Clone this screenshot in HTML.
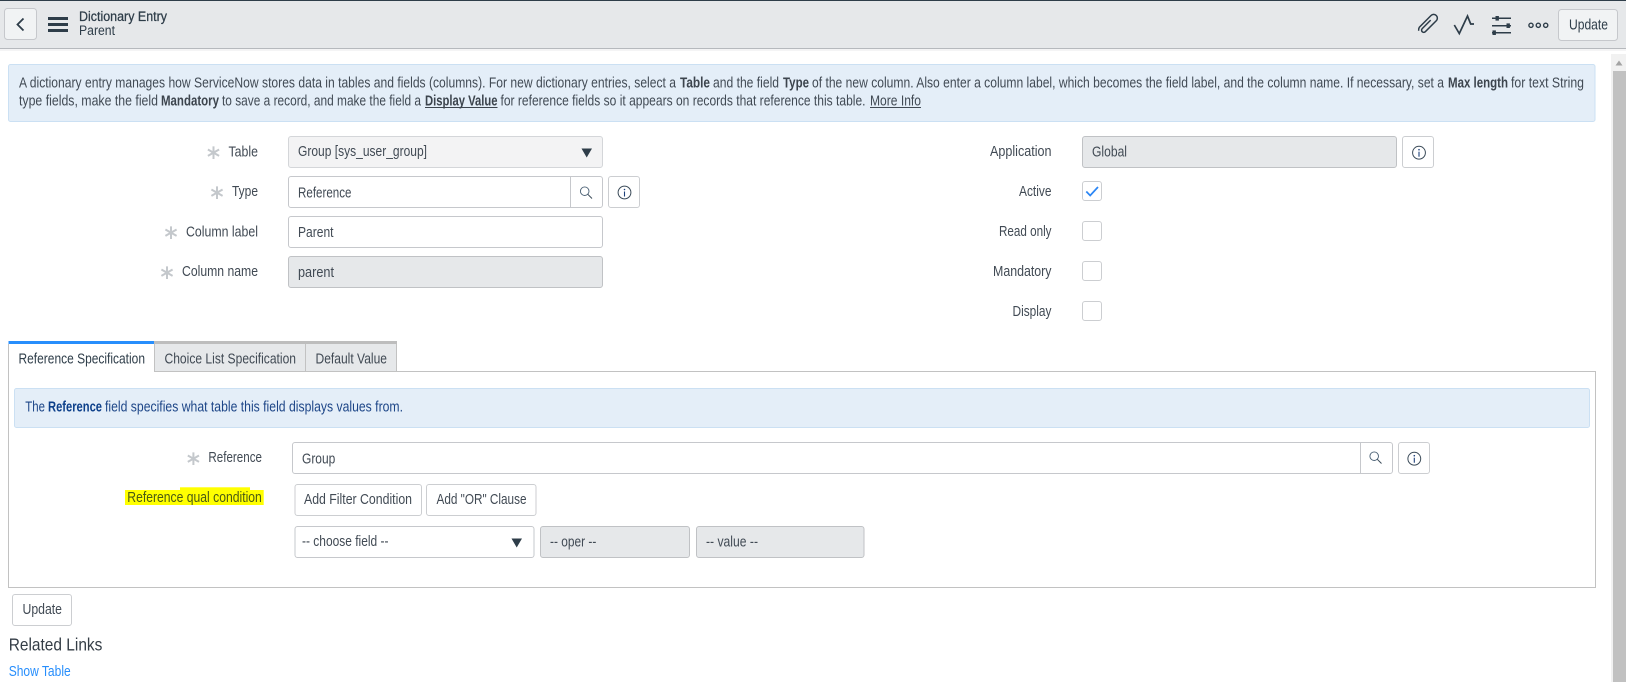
<!DOCTYPE html>
<html lang="en"><head><meta charset="utf-8"><title>Dictionary Entry - Parent</title>
<style>
html,body{margin:0;padding:0;background:#fff;width:1626px;height:682px;overflow:hidden}
svg{display:block;position:absolute;left:0;top:0}
text{font-family:"Liberation Sans",sans-serif;font-size:14.5px;fill:#414a54}
.b{font-weight:bold;fill:#3c444d}
.m{stroke:#2e3d49;stroke-width:.25;fill:#2e3d49}
.box{fill:#fff;stroke:#c6c8cc;stroke-width:1}
.dis{fill:#e6e8ea;stroke:#c0c2c5;stroke-width:1}
.btn{fill:#fff;stroke:#ccced1;stroke-width:1}
.ast{stroke:#c4c8cc;stroke-width:2;fill:none}
.tri{fill:#2e3d49}
.ic{fill:none;stroke:#2e3d49}
</style></head><body>
<svg width="1626" height="682" viewBox="0 0 1626 682" xmlns="http://www.w3.org/2000/svg">
<defs>
<g id="ast"><path class="ast" d="M0-6.3V6.3M-5.6-3.2L5.6 3.2M-5.6 3.2L5.6-3.2"/></g>
<g id="srch"><circle cx="-1.3" cy="-1.3" r="4.3" fill="none" stroke="#4a6074" stroke-width=".9"/><path d="M1.8 1.8L6 6" stroke="#3a4a58" stroke-width="1"/></g>
<g id="info"><circle r="6.4" fill="none" stroke="#3a4a58" stroke-width="1"/><path d="M0-1V4" stroke="#1d3f7a" stroke-width="1.1"/><circle cy="-3" r=".8" fill="#1d3f7a"/></g>
</defs>

<!-- Top bar -->
<rect x="0" y="0" width="1626" height="48" fill="#e6e8ea"/>
<rect x="0" y="0" width="1626" height="1" fill="#2e3d49"/>
<rect x="0" y="48" width="1626" height="1" fill="#b6b9bd"/>
<rect x="0" y="49" width="1626" height="2" fill="#f4f4f5"/>
<rect x="4.5" y="8.5" width="32" height="31" rx="3" fill="#f1f3f4" stroke="#c6c8cc"/>
<path d="M23.5 18.5L17.5 24.5L23.5 30.5" fill="none" stroke="#2e3d49" stroke-width="1.8"/>
<rect x="48" y="17" width="20" height="3" fill="#2e3d49"/>
<rect x="48" y="23" width="20" height="3" fill="#2e3d49"/>
<rect x="48" y="29" width="20" height="3" fill="#2e3d49"/>
<text class="m" x="79" y="21" textLength="88" lengthAdjust="spacingAndGlyphs" style="font-size:13.5px">Dictionary Entry</text>
<text x="79" y="35" textLength="36" lengthAdjust="spacingAndGlyphs" style="font-size:13.5px;fill:#2e3d49">Parent</text>

<g transform="translate(1428 24.5) rotate(45)"><path class="ic" stroke-width="1.5" d="M-1.2-5V7a2.2 2.2 0 0 0 4.4 0V-8.5a3.7 3.7 0 0 0-7.4 0V8a5 5 0 0 0 2 3"/></g>
<path class="ic" stroke-width="1.7" d="M1454.3 25L1459.3 33.5L1467.5 16L1470.7 24H1474"/>
<g class="ic" stroke-width="1.5"><path d="M1492 18.3H1511M1492 25.7H1511M1492 32.7H1511"/></g>
<rect x="1495.5" y="16" width="3.4" height="4.6" fill="#2e3d49"/>
<rect x="1506.5" y="23.4" width="3.4" height="4.6" fill="#2e3d49"/>
<rect x="1492.5" y="30.4" width="3.4" height="4.6" fill="#2e3d49"/>
<circle class="ic" cx="1531" cy="25.3" r="2.1" stroke-width="1.4"/>
<circle class="ic" cx="1538.3" cy="25.3" r="2.1" stroke-width="1.4"/>
<circle class="ic" cx="1545.7" cy="25.3" r="2.1" stroke-width="1.4"/>
<rect x="1558.5" y="9.5" width="59" height="31" rx="3" fill="#f1f3f4" stroke="#c6c8cc"/>
<text x="1569" y="29.5" textLength="39" lengthAdjust="spacingAndGlyphs" style="fill:#2e3d49">Update</text>

<!-- Scrollbar -->
<rect x="1611" y="54" width="15" height="628" fill="#f1f1f1"/>
<rect x="1613" y="71" width="13" height="611" fill="#c1c1c1"/>
<path d="M1619 60.5L1622.5 65.5H1615.5Z" fill="#a3a3a3"/>

<!-- Info banner -->
<rect x="8.5" y="64.5" width="1586.5" height="57" rx="2" fill="#e4eef8" stroke="#cbe0f3"/>
<text x="19" y="87.5" textLength="657" lengthAdjust="spacingAndGlyphs">A dictionary entry manages how ServiceNow stores data in tables and fields (columns). For new dictionary entries, select a</text>
<text class="b" x="680" y="87.5" textLength="30" lengthAdjust="spacingAndGlyphs">Table</text>
<text x="713" y="87.5" textLength="66" lengthAdjust="spacingAndGlyphs">and the field</text>
<text class="b" x="783" y="87.5" textLength="26" lengthAdjust="spacingAndGlyphs">Type</text>
<text x="812" y="87.5" textLength="632" lengthAdjust="spacingAndGlyphs">of the new column. Also enter a column label, which becomes the field label, and the column name. If necessary, set a</text>
<text class="b" x="1448" y="87.5" textLength="60" lengthAdjust="spacingAndGlyphs">Max length</text>
<text x="1511" y="87.5" textLength="73" lengthAdjust="spacingAndGlyphs">for text String</text>

<text x="19" y="105.5" textLength="139" lengthAdjust="spacingAndGlyphs">type fields, make the field</text>
<text class="b" x="161" y="105.5" textLength="58" lengthAdjust="spacingAndGlyphs">Mandatory</text>
<text x="222" y="105.5" textLength="199" lengthAdjust="spacingAndGlyphs">to save a record, and make the field a</text>
<text class="b" x="425" y="105.5" textLength="72.5" lengthAdjust="spacingAndGlyphs">Display Value</text>
<rect x="425" y="107" width="72.5" height="1" fill="#3c444d"/>
<text x="500.5" y="105.5" textLength="365" lengthAdjust="spacingAndGlyphs">for reference fields so it appears on records that reference this table.</text>
<text x="870" y="105.5" textLength="51" lengthAdjust="spacingAndGlyphs">More Info</text>
<rect x="870" y="107" width="51" height="1" fill="#414a54"/>

<!-- Left column -->
<use href="#ast" x="213.5" y="152.7"/>
<text x="228.5" y="156.5" textLength="29.5" lengthAdjust="spacingAndGlyphs">Table</text>
<rect x="288.5" y="136.5" width="314" height="31" rx="2.5" fill="#f3f3f4" stroke="#d4d6d9"/>
<text x="298" y="156" textLength="129" lengthAdjust="spacingAndGlyphs">Group [sys_user_group]</text>
<path class="tri" d="M581.5 148.5H592L586.7 157.5Z"/>

<use href="#ast" x="217" y="192.7"/>
<text x="232" y="196" textLength="26" lengthAdjust="spacingAndGlyphs">Type</text>
<rect class="box" x="288.5" y="176.5" width="314" height="31" rx="2.5"/>
<path d="M570.5 177V207" stroke="#c6c8cc"/>
<use href="#srch" x="586" y="192.5"/>
<text x="298" y="197.5" textLength="53.5" lengthAdjust="spacingAndGlyphs">Reference</text>
<rect class="btn" x="608.5" y="176.5" width="31" height="31" rx="2.5"/>
<use href="#info" x="624.5" y="192.5"/>

<use href="#ast" x="171" y="232.7"/>
<text x="186" y="236.5" textLength="72" lengthAdjust="spacingAndGlyphs">Column label</text>
<rect class="box" x="288.5" y="216.5" width="314" height="31" rx="2.5"/>
<text x="298" y="237" textLength="35.5" lengthAdjust="spacingAndGlyphs">Parent</text>

<use href="#ast" x="167" y="272.7"/>
<text x="182" y="276" textLength="76" lengthAdjust="spacingAndGlyphs">Column name</text>
<rect class="dis" x="288.5" y="256.5" width="314" height="31" rx="2.5"/>
<text x="298" y="277" textLength="36" lengthAdjust="spacingAndGlyphs">parent</text>

<!-- Right column -->
<text x="990" y="156" textLength="61.5" lengthAdjust="spacingAndGlyphs">Application</text>
<rect class="dis" x="1082.5" y="136.5" width="314" height="31" rx="2.5"/>
<text x="1092" y="156.5" textLength="35" lengthAdjust="spacingAndGlyphs">Global</text>
<rect class="btn" x="1402.5" y="136.5" width="31" height="31" rx="2.5"/>
<use href="#info" x="1419" y="152.7"/>

<text x="1019" y="196" textLength="32.5" lengthAdjust="spacingAndGlyphs">Active</text>
<rect class="btn" x="1082.5" y="181.5" width="19" height="19" rx="2.5"/>
<path d="M1086.3 191.5L1090.2 195.5L1098 187" fill="none" stroke="#2b86f5" stroke-width="1.7"/>

<text x="999" y="236" textLength="52.5" lengthAdjust="spacingAndGlyphs">Read only</text>
<rect class="btn" x="1082.5" y="221.5" width="19" height="19" rx="2.5"/>
<text x="993" y="276" textLength="58.5" lengthAdjust="spacingAndGlyphs">Mandatory</text>
<rect class="btn" x="1082.5" y="261.5" width="19" height="19" rx="2.5"/>
<text x="1012.5" y="316" textLength="39" lengthAdjust="spacingAndGlyphs">Display</text>
<rect class="btn" x="1082.5" y="301.5" width="19" height="19" rx="2.5"/>

<!-- Tabs and panel -->
<rect x="8.5" y="371.5" width="1587" height="216" fill="#fff" stroke="#c2c2c2"/>
<path d="M154.5 342.5H305.5V371.5H154.5Z" fill="#e6e8ea" stroke="#c2c2c2"/>
<path d="M305.5 342.5H396.5V371.5H305.5Z" fill="#e6e8ea" stroke="#c2c2c2"/>
<rect x="154" y="341" width="243" height="3" fill="#bdbdbd"/>
<rect x="8" y="344" width="146" height="28.5" fill="#fff"/>
<path d="M8.5 344V373M154.5 344V372" stroke="#c2c2c2" fill="none"/>
<rect x="8.5" y="341" width="145.5" height="3" fill="#278efc"/>
<text x="18.5" y="363.3" textLength="126.5" lengthAdjust="spacingAndGlyphs" style="fill:#2e3d49">Reference Specification</text>
<text x="164.5" y="363.3" textLength="131.5" lengthAdjust="spacingAndGlyphs">Choice List Specification</text>
<text x="315.5" y="363.3" textLength="71.5" lengthAdjust="spacingAndGlyphs">Default Value</text>

<rect x="14.5" y="388.5" width="1575" height="39" rx="2" fill="#e4eef8" stroke="#cbe0f3"/>
<text x="25.3" y="411.7" textLength="19.7" lengthAdjust="spacingAndGlyphs" style="fill:#1c4587">The</text>
<text x="48" y="411.7" textLength="54" lengthAdjust="spacingAndGlyphs" style="fill:#0c3f8a;font-weight:bold">Reference</text>
<text x="105" y="411.7" textLength="298" lengthAdjust="spacingAndGlyphs" style="fill:#1c4587">field specifies what table this field displays values from.</text>

<use href="#ast" x="193.4" y="458.7"/>
<text x="208.4" y="462" textLength="53.6" lengthAdjust="spacingAndGlyphs">Reference</text>
<rect class="box" x="292.5" y="442.5" width="1100" height="31" rx="2.5"/>
<path d="M1360.5 443V473" stroke="#c6c8cc"/>
<use href="#srch" x="1375.5" y="457.5"/>
<text x="302" y="463.3" textLength="33.3" lengthAdjust="spacingAndGlyphs">Group</text>
<rect class="btn" x="1398.5" y="442.5" width="31" height="31" rx="2.5"/>
<use href="#info" x="1414.3" y="458.7"/>

<rect x="125" y="490" width="138.7" height="15" fill="#ffff00"/>
<rect x="180" y="487.3" width="70" height="4" fill="#ffff00"/>
<text x="127.3" y="502" textLength="134.5" lengthAdjust="spacingAndGlyphs" style="fill:#4a5a14">Reference qual condition</text>

<rect class="btn" x="295" y="484.5" width="126.5" height="31" rx="2.5"/>
<text x="304" y="504" textLength="108" lengthAdjust="spacingAndGlyphs">Add Filter Condition</text>
<rect class="btn" x="426.5" y="484.5" width="109.5" height="31" rx="2.5"/>
<text x="436.5" y="504" textLength="90" lengthAdjust="spacingAndGlyphs">Add "OR" Clause</text>

<rect class="box" x="295" y="526.5" width="239" height="31" rx="2.5"/>
<text x="302" y="546" textLength="86.5" lengthAdjust="spacingAndGlyphs">-- choose field --</text>
<path class="tri" d="M511.5 538.5H522L516.7 547.5Z"/>
<rect class="dis" x="540.5" y="526.5" width="149" height="31" rx="2.5"/>
<text x="550" y="546.5" textLength="46.3" lengthAdjust="spacingAndGlyphs">-- oper --</text>
<rect class="dis" x="696.5" y="526.5" width="167.5" height="31" rx="2.5"/>
<text x="706" y="546.5" textLength="52" lengthAdjust="spacingAndGlyphs">-- value --</text>

<rect class="btn" x="12.5" y="594.5" width="59" height="31" rx="2.5"/>
<text x="22.5" y="614" textLength="39.5" lengthAdjust="spacingAndGlyphs">Update</text>
<text x="8.7" y="650.7" textLength="93.7" lengthAdjust="spacingAndGlyphs" style="font-size:17.5px;fill:#343d46">Related Links</text>
<text x="8.7" y="676" textLength="62" lengthAdjust="spacingAndGlyphs" style="fill:#278efc">Show Table</text>
</svg>
</body></html>
